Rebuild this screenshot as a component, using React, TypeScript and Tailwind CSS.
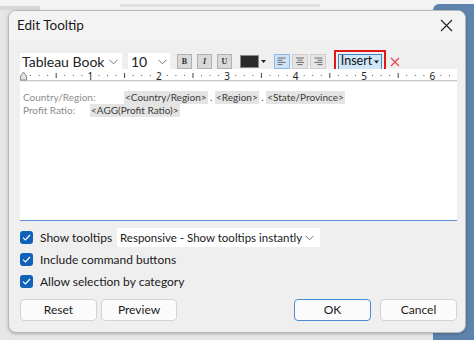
import React from "react";

const ui = { fontFamily: 'Lato, "Noto Sans", Arial, sans-serif' };
const tb = { fontFamily: 'Lato, "Noto Sans", Arial, sans-serif' };

const INCH = 68.4;
const X0 = 2;

function Chevron({ className = "" }: { className?: string }) {
  return (
    <svg width="9" height="6" viewBox="0 0 9 6" className={`shrink-0 ${className}`}>
      <path d="M0.5 0.8 L4.5 4.8 L8.5 0.8" fill="none" stroke="#777" strokeWidth="1" />
    </svg>
  );
}

function Check() {
  return (
    <div className="w-[13px] h-[13px] shrink-0 rounded-[3px] bg-[#1061b8] flex items-center justify-center">
      <svg width="9" height="7" viewBox="0 0 9 7">
        <path d="M1 3.6 L3.4 6 L8 1" fill="none" stroke="#fff" strokeWidth="1.2" />
      </svg>
    </div>
  );
}

function Ruler() {
  const items: React.ReactNode[] = [];
  const nums: number[] = [];
  for (let i = 1; i < 56; i++) {
    const x = X0 + (i * INCH) / 8;
    if (x > 434) break;
    if (i % 8 === 0) {
      nums.push(i / 8);
    } else if (i % 4 === 0) {
      items.push(<line key={i} x1={x} x2={x} y1={4} y2={9} stroke="#444" strokeWidth="1" />);
    } else {
      items.push(<rect key={i} x={x - 0.5} y={6} width={1} height={1} fill="#555" />);
    }
  }
  return (
    <div className="relative w-[437px] h-[12px] bg-white">
      <svg width="437" height="12" viewBox="0 0 437 12" className="block">
        <line x1="0" x2="437" y1="11.5" y2="11.5" stroke="#c8c8c8" />
        <path d="M0.5 11 L0.5 7 L3.5 3 L6.5 7 L6.5 11 Z" fill="#e0e0e0" stroke="#777" strokeWidth="0.8" />
        {items}
      </svg>
      {nums.map((n) => (
        <span
          key={n}
          className="absolute top-[2px] w-[10px] -ml-[5px] text-center text-[10px] leading-[10px] text-[#222]"
          style={{ left: X0 + n * INCH, fontFamily: '"Noto Sans", Arial, sans-serif' }}
        >
          {n}
        </span>
      ))}
    </div>
  );
}

function Field({ children }: { children: React.ReactNode }) {
  return <span className="bg-[#e4e4e4] text-[#3a3a3a] px-[1px]">{children}</span>;
}

function FmtBtn({ label, italic }: { label: string; italic?: boolean }) {
  return (
    <div
      className={`w-[15px] h-[15px] bg-[#d9d9d9] border border-[#b0b0b0] flex items-center justify-center text-[8px] font-bold text-[#333] ${italic ? "italic" : ""}`}
      style={{ fontFamily: '"Liberation Serif", serif' }}
    >
      {label}
    </div>
  );
}

function AlignIcon({ mode }: { mode: "l" | "c" | "r" }) {
  const lines = [
    [1, 9],
    [1, 6],
    [1, 9],
    [1, 6],
  ];
  return (
    <svg width="10" height="9" viewBox="0 0 10 9">
      {lines.map(([a, b], i) => {
        const w = b - a;
        let s = 0.5;
        if (mode === "c") s = (10 - w) / 2;
        if (mode === "r") s = 9.5 - w;
        return <line key={i} x1={s} x2={s + w} y1={1 + i * 2.2} y2={1 + i * 2.2} stroke="#6b6b6b" strokeWidth="1" />;
      })}
    </svg>
  );
}

export default function App() {
  return (
    <div className="relative w-[474px] h-[340px] overflow-hidden bg-[#e6e6e6]" style={ui}>
      {/* backdrop windows */}
      <div className="absolute left-0 top-0 w-[474px] h-[10px] bg-[#f4f4f4]" />
      <div className="absolute left-[120px] top-[4px] w-[200px] h-[3px] bg-[#dedede]" />
      <div className="absolute left-[433px] top-[4px] w-[41px] h-[336px] bg-[#5d84ad] rounded-tl-[6px]" />
      <div className="absolute left-[0px] top-[6px] w-[40px] h-[4px] bg-[#d8d8d8]" />

      <div className="relative ml-[8px] mt-[10px] w-[458px] h-[323px] rounded-[8px] border border-[#b8b8b8] bg-[#efefef] shadow-[0_1px_3px_rgba(0,0,0,0.25)] flex flex-col overflow-hidden">
        {/* title bar */}
        <div className="h-[29px] flex items-center justify-between pl-[8px] pr-[12px] bg-[#f3f3f3]">
          <span className="text-[13.5px] text-[#1a1a1a] leading-none whitespace-nowrap">Edit Tooltip</span>
          <svg width="13" height="13" viewBox="0 0 13 13">
            <path d="M1 1 L12 12 M12 1 L1 12" stroke="#222" strokeWidth="1.1" />
          </svg>
        </div>

        <div className="pl-[11px] pr-[8px] flex flex-col">
          {/* toolbar */}
          <div className="h-[27px] mt-[8px] flex items-center whitespace-nowrap">
            <div className="w-[102px] h-[18px] shrink-0 bg-white flex items-center justify-between pl-[2px] pr-[4px]">
              <span className="text-[14px] text-[#222] leading-none" style={tb}>Tableau Book</span>
              <Chevron />
            </div>
            <div className="ml-[6px] w-[42px] h-[18px] shrink-0 bg-white flex items-center justify-between pl-[3px] pr-[3px]">
              <span className="text-[14px] text-[#222] leading-none" style={tb}>10</span>
              <Chevron />
            </div>
            <div className="ml-[7px] flex gap-[5px]">
              <FmtBtn label="B" />
              <FmtBtn label="I" italic />
              <FmtBtn label="U" />
            </div>
            <div className="ml-[8px] flex items-center">
              <div className="w-[19px] h-[13px] bg-[#2a2a2a] border border-[#8a8a8a]" />
              <svg width="7" height="5" viewBox="0 0 7 5" className="ml-[1px]">
                <path d="M1 1 L6 1 L3.5 4 Z" fill="#222" />
              </svg>
            </div>
            <div className="ml-[7px] flex gap-[2px]">
              <div className="w-[16px] h-[15px] bg-[#cde3f7] border border-[#8cb8e6] flex items-center justify-center">
                <AlignIcon mode="l" />
              </div>
              <div className="w-[16px] h-[15px] bg-[#e5e5e5] border border-[#cfcfcf] flex items-center justify-center">
                <AlignIcon mode="c" />
              </div>
              <div className="w-[16px] h-[15px] bg-[#e5e5e5] border border-[#cfcfcf] flex items-center justify-center">
                <AlignIcon mode="r" />
              </div>
            </div>
            <div className="ml-[8px] w-[52px] h-[24px] border-2 border-[#e01818] flex items-center justify-center">
              <div className="w-[44px] h-[16px] bg-[#cfe6f8] border border-[#3d87c9] flex items-center justify-center gap-[2px]">
                <span className="text-[12.5px] text-[#111] leading-none">Insert</span>
                <svg width="5" height="4" viewBox="0 0 5 4">
                  <path d="M0 0.5 L5 0.5 L2.5 3.5 Z" fill="#222" />
                </svg>
              </div>
            </div>
            <svg width="10" height="10" viewBox="0 0 10 10" className="ml-[4px]">
              <path d="M1 1 L9 9 M9 1 L1 9" stroke="#e05050" strokeWidth="1.4" />
            </svg>
          </div>

          {/* ruler */}
          <div className="mt-[-6px] h-[12px]">
            <Ruler />
          </div>

          {/* text area */}
          <div className="mt-[1px] h-[139px] bg-white border-b border-[#5b8ed3] pl-[3px] pt-[9px] text-[10px] leading-[13px]" style={tb}>
            <div className="flex items-center whitespace-pre">
              <span className="w-[101px] text-[#8c8c8c]">Country/Region:</span>
              <Field>{"<Country/Region>"}</Field>
              <span className="text-[#444]">{" . "}</span>
              <Field>{"<Region>"}</Field>
              <span className="text-[#444]">{" . "}</span>
              <Field>{"<State/Province>"}</Field>
            </div>
            <div className="flex items-center whitespace-pre">
              <span className="w-[67px] text-[#8c8c8c]">Profit Ratio:</span>
              <Field>{"<AGG(Profit Ratio)>"}</Field>
            </div>
          </div>

          {/* options */}
          <div className="mt-[6px] flex flex-col whitespace-nowrap">
            <div className="h-[21px] flex items-center">
              <Check />
              <span className="ml-[7px] w-[77px] text-[12px] text-[#1a1a1a]">Show tooltips</span>
              <div className="w-[203px] h-[19px] bg-white flex items-center justify-between pl-[3px] pr-[6px]">
                <span className="text-[11.5px] text-[#1a1a1a] leading-none">Responsive - Show tooltips instantly</span>
                <Chevron />
              </div>
            </div>
            <div className="mt-[1px] h-[21px] flex items-center">
              <Check />
              <span className="ml-[7px] text-[12px] text-[#1a1a1a]">Include command buttons</span>
            </div>
            <div className="mt-[1px] h-[21px] flex items-center">
              <Check />
              <span className="ml-[7px] text-[12px] text-[#1a1a1a]">Allow selection by category</span>
            </div>
          </div>

          {/* buttons */}
          <div className="mt-[7px] flex items-center">
            <button className="w-[77px] h-[22px] rounded-[4px] bg-[#fbfbfb] border border-[#d3d3d3] text-[12px] text-[#1a1a1a] leading-none">Reset</button>
            <button className="ml-[4px] w-[76px] h-[22px] rounded-[4px] bg-[#fbfbfb] border border-[#d3d3d3] text-[12px] text-[#1a1a1a] leading-none">Preview</button>
            <button className="ml-auto w-[77px] h-[22px] rounded-[4px] bg-[#fbfbfb] border border-[#4a8bd4] text-[12px] text-[#1a1a1a] leading-none">OK</button>
            <button className="ml-[9px] w-[77px] h-[22px] rounded-[4px] bg-[#fbfbfb] border border-[#d3d3d3] text-[12px] text-[#1a1a1a] leading-none">Cancel</button>
          </div>
        </div>
      </div>
    </div>
  );
}
